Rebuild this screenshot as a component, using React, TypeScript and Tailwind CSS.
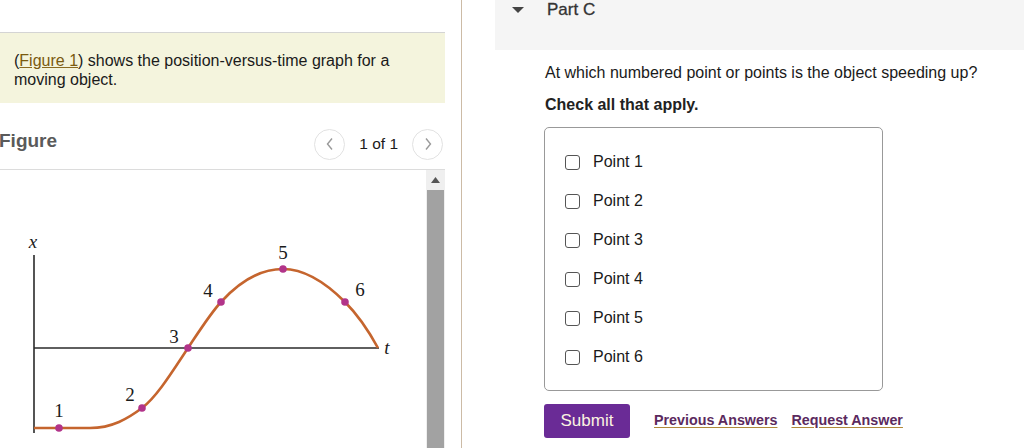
import React from "react";

const points: [number, number, string, number, number][] = [
  [59, 428, "1", 59, 417],
  [142, 408, "2", 130, 401],
  [188, 348, "3", 174, 343],
  [221, 302, "4", 208, 297],
  [283, 269, "5", 283, 259],
  [345, 302, "6", 360, 296],
];

function Graph() {
  return (
    <svg width="426" height="278" viewBox="0 170 426 278" className="block">
      <line x1="34" y1="255" x2="34" y2="433" stroke="#2a2a2a" strokeWidth="1.6" />
      <line x1="34" y1="348" x2="379" y2="348" stroke="#2a2a2a" strokeWidth="1.6" />
      <path
        d="M34 428 L90 428 C112 428 128 418.5 142 408 C157 396.75 173 370.5 188 348 C199 331.5 210 314 221 302 C241 280 263 269 283 269 C303 269 325 282 345 302 C356 313 369 331.5 378 348"
        fill="none"
        stroke="#c5652e"
        strokeWidth="2.6"
      />
      {points.map(([x, y, l, lx, ly]) => (
        <g key={l}>
          <circle cx={x} cy={y} r="3.8" fill="#b2348a" />
          <text
            x={lx}
            y={ly}
            textAnchor="middle"
            fontFamily="'Liberation Serif', serif"
            fontSize="19"
            fill="#1a1a1a"
          >
            {l}
          </text>
        </g>
      ))}
      <text x="33" y="248" textAnchor="middle" fontFamily="'Liberation Serif', serif" fontStyle="italic" fontSize="19" fill="#1a1a1a">
        x
      </text>
      <text x="387" y="354" textAnchor="middle" fontFamily="'Liberation Serif', serif" fontStyle="italic" fontSize="19" fill="#1a1a1a">
        t
      </text>
    </svg>
  );
}

function CircleBtn({ dir }: { dir: "l" | "r" }) {
  return (
    <div className="w-[31px] h-[31px] rounded-full border border-[#e2e2e2] bg-white flex items-center justify-center">
      <svg width="10" height="14" viewBox="0 0 10 14">
        {dir === "l" ? (
          <path d="M7 1.5 L2.5 7 L7 12.5" fill="none" stroke="#9a9a9a" strokeWidth="1.4" />
        ) : (
          <path d="M3 1.5 L7.5 7 L3 12.5" fill="none" stroke="#9a9a9a" strokeWidth="1.4" />
        )}
      </svg>
    </div>
  );
}

export default function App() {
  return (
    <div
      className="w-[1024px] h-[448px] overflow-hidden bg-white flex text-[#1a1a1a]"
      style={{ fontFamily: "'Liberation Sans', Arial, sans-serif" }}
    >
      {/* Left column */}
      <div className="w-[461px] shrink-0 flex flex-col">
        <div className="w-[445px] mt-[32px] h-[71px] border-t border-[#d4d4d4] bg-[#f4f4dd] pl-[14px] pt-[18px] text-[16px] leading-[19px]">
          (<span className="text-[#7a5a10] underline decoration-[#8a6a20]">Figure 1</span>) shows the position-versus-time graph for a
          <br />
          moving object.
        </div>
        <div className="w-[445px] h-[67px] border-b border-[#dcdcdc] flex items-center justify-between pr-[2px] pt-[16px]">
          <span className="text-[19px] font-bold text-[#5a5a5a] -ml-[1px] mt-[-5px]">Figure</span>
          <div className="flex items-center">
            <CircleBtn dir="l" />
            <span className="text-[15.5px] mx-[14px] text-[#1a1a1a]">1 of 1</span>
            <CircleBtn dir="r" />
          </div>
        </div>
        <div className="flex flex-1">
          <Graph />
          <div className="w-[19px] bg-[#efefef] flex flex-col items-center">
            <div className="h-[20px] flex items-center justify-center">
              <svg width="9" height="6" viewBox="0 0 9 6">
                <path d="M0 6 L4.5 0 L9 6 Z" fill="#555" />
              </svg>
            </div>
            <div className="w-[17px] flex-1 bg-[#a2a2a2]" />
          </div>
        </div>
      </div>
      <div className="w-[1px] h-full bg-[#ccbba6]" />
      {/* Right column */}
      <div className="flex-1 pl-[33px] flex flex-col">
        <div className="h-[50px] bg-[#f5f5f5] flex items-start">
          <svg width="12" height="7" viewBox="0 0 12 7" className="ml-[17px] mt-[7px]">
            <path d="M0 0 L12 0 L6 6 Z" fill="#444" />
          </svg>
          <span className="ml-[23px] text-[17px] text-[#333] leading-[20px] mt-[0px] [-webkit-text-stroke:0.3px_#333]">Part C</span>
        </div>
        <div className="pl-[50px]">
          <div className="text-[16px] mt-[14px] leading-[18px]">At which numbered point or points is the object speeding up?</div>
          <div className="text-[16px] font-bold mt-[14px] leading-[18px] text-[#222]">Check all that apply.</div>
          <div className="w-[339px] h-[264px] mt-[13px] -ml-[1px] border border-[#999] rounded-[5px] pl-[20px] pt-[25px]">
            {[1, 2, 3, 4, 5, 6].map((n) => (
              <div key={n} className="h-[39px] flex items-start">
                <div className="w-[15px] h-[15px] mt-[2px] border-[1.5px] border-[#555] rounded-[3px]" />
                <span className="ml-[13px] text-[16px] leading-[18px]">Point {n}</span>
              </div>
            ))}
          </div>
          <div className="flex items-center mt-[13px] -ml-[1px]">
            <div className="w-[86px] h-[34px] bg-[#6a2b96] rounded-[3px] flex items-center justify-center text-[17px] text-[#fbf3e0]">
              Submit
            </div>
            <span className="ml-[24px] text-[14.3px] font-bold text-[#5b2a5e] underline decoration-[#b0893a] underline-offset-2">
              Previous Answers
            </span>
            <span className="ml-[14px] text-[14.3px] font-bold text-[#5b2a5e] underline decoration-[#b0893a] underline-offset-2">
              Request Answer
            </span>
          </div>
        </div>
      </div>
    </div>
  );
}
